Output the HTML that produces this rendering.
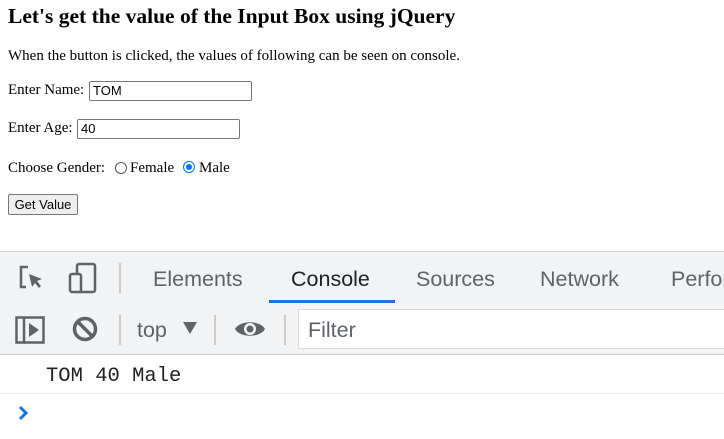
<!DOCTYPE html>
<html style="overflow:hidden"><head><style>
body{margin:0;width:724px;height:439px;overflow:hidden;background:#fff;position:relative;font-family:"Liberation Serif",serif;}
.a{position:absolute;white-space:nowrap}
.inp{position:absolute;border:1px solid #767676;border-radius:2px;height:18px;box-sizing:border-box;font:13px "Liberation Sans",sans-serif;padding:1px 3px;line-height:15px}
.ds{font-family:"Liberation Sans",sans-serif;color:#5f6368;font-size:21.5px}
</style></head><body>
<div class="a" style="left:8px;top:4px;font-size:21.5px;font-weight:bold">Let's get the value of the Input Box using jQuery</div>
<div class="a" style="left:8px;top:48px;font-size:15px">When the button is clicked, the values of following can be seen on console.</div>
<div class="a" style="left:8px;top:82px;font-size:15px">Enter Name:</div>
<div class="inp" style="left:89px;top:81px;width:163px;height:20px">TOM</div>
<div class="a" style="left:8px;top:120px;font-size:15px">Enter Age:</div>
<div class="inp" style="left:77px;top:119px;width:163px;height:20px">40</div>
<div class="a" style="left:8px;top:160px;font-size:15px">Choose Gender:</div>
<div class="a" style="left:115px;top:162px;width:10px;height:10px;border:1px solid #555;border-radius:50%"></div>
<div class="a" style="left:130px;top:160px;font-size:15px">Female</div>
<div class="a" style="left:183px;top:161px;width:10px;height:10px;border:1px solid #0075ff;border-radius:50%;background:#fff"><div style="margin:2px;width:6px;height:6px;border-radius:50%;background:#0075ff"></div></div>
<div class="a" style="left:199px;top:160px;font-size:15px">Male</div>
<div class="a" style="left:8px;top:194px;width:70px;height:21px;box-sizing:border-box;border:1px solid #767676;border-radius:2px;background:#efefef;font:13px 'Liberation Sans',sans-serif;text-align:center;line-height:19px">Get Value</div>

<div class="a" style="left:0;top:251px;width:724px;height:52px;background:#f1f3f4;border-top:1px solid #cacdd1;border-bottom:1px solid #cacdd1"></div>
<svg class="a" style="left:18px;top:264px" width="28" height="28" viewBox="0 0 28 28" fill="none" stroke="#5f6368" stroke-width="2.5"><path d="M10 3H3v20h5"/><path d="M11 10l13 5-5 2 4 5-2 2-4-5-3 4z" fill="#5f6368" stroke="none"/></svg>
<svg class="a" style="left:68px;top:262px" width="30" height="32" viewBox="0 0 30 32" fill="none" stroke="#5f6368" stroke-width="2.5"><rect x="9" y="2" width="18" height="28" rx="2"/><rect x="2" y="12" width="11" height="18" rx="2" fill="#f1f3f4"/></svg>
<div class="a" style="left:119px;top:263px;width:2px;height:30px;background:#ccc"></div>
<div class="a ds" style="left:153px;top:267px">Elements</div>
<div class="a ds" style="left:291px;top:267px;color:#202124">Console</div>
<div class="a" style="left:269px;top:300px;width:126px;height:3px;background:#1a73e8"></div>
<div class="a ds" style="left:416px;top:267px">Sources</div>
<div class="a ds" style="left:540px;top:267px">Network</div>
<div class="a ds" style="left:671px;top:267px;width:53px;overflow:hidden">Performance</div>

<div class="a" style="left:0;top:304px;width:724px;height:50px;background:#f1f3f4;border-bottom:1px solid #cacdd1"></div>
<svg class="a" style="left:15px;top:316px" width="30" height="28" viewBox="0 0 30 28" fill="none" stroke="#5f6368" stroke-width="2.5"><rect x="1.5" y="1.5" width="27" height="25"/><path d="M9 2v24"/><path d="M14 7l10 7-10 7z" fill="#5f6368" stroke="none"/></svg>
<svg class="a" style="left:72px;top:316px" width="26" height="26" viewBox="0 0 26 26" fill="none" stroke="#5f6368" stroke-width="3.5"><circle cx="13" cy="13" r="10.5"/><path d="M5.5 5.5l15 15"/></svg>
<div class="a" style="left:119px;top:315px;width:2px;height:30px;background:#ccc"></div>
<div class="a ds" style="left:137px;top:318px">top</div>
<svg class="a" style="left:183px;top:322px" width="14" height="12"><path d="M0 0h14L7 12z" fill="#5f6368"/></svg>
<div class="a" style="left:214px;top:315px;width:2px;height:30px;background:#ccc"></div>
<svg class="a" style="left:234px;top:318px" width="32" height="22" viewBox="0 0 32 22"><path d="M1 11C6 2 26 2 31 11 26 20 6 20 1 11z" fill="#5f6368"/><circle cx="16" cy="11" r="6" fill="#f1f3f4"/><circle cx="16" cy="11" r="3.5" fill="#5f6368"/></svg>
<div class="a" style="left:284px;top:315px;width:2px;height:30px;background:#ccc"></div>
<div class="a" style="left:298px;top:309px;width:426px;height:40px;background:#fff;border:1px solid #dadce0;border-right:none;box-sizing:border-box"></div>
<div class="a ds" style="left:308px;top:318px">Filter</div>

<div class="a" style="left:46px;top:365px;font:20.5px 'Liberation Mono','DejaVu Sans Mono',monospace;color:#202124">TOM 40 Male</div>
<div class="a" style="left:0;top:393px;width:724px;height:1px;background:#e8eaed"></div>
<svg class="a" style="left:18px;top:405px" width="12" height="16"><path d="M2 2l6 6-6 6" fill="none" stroke="#1a73e8" stroke-width="3"/></svg>
</body></html>
